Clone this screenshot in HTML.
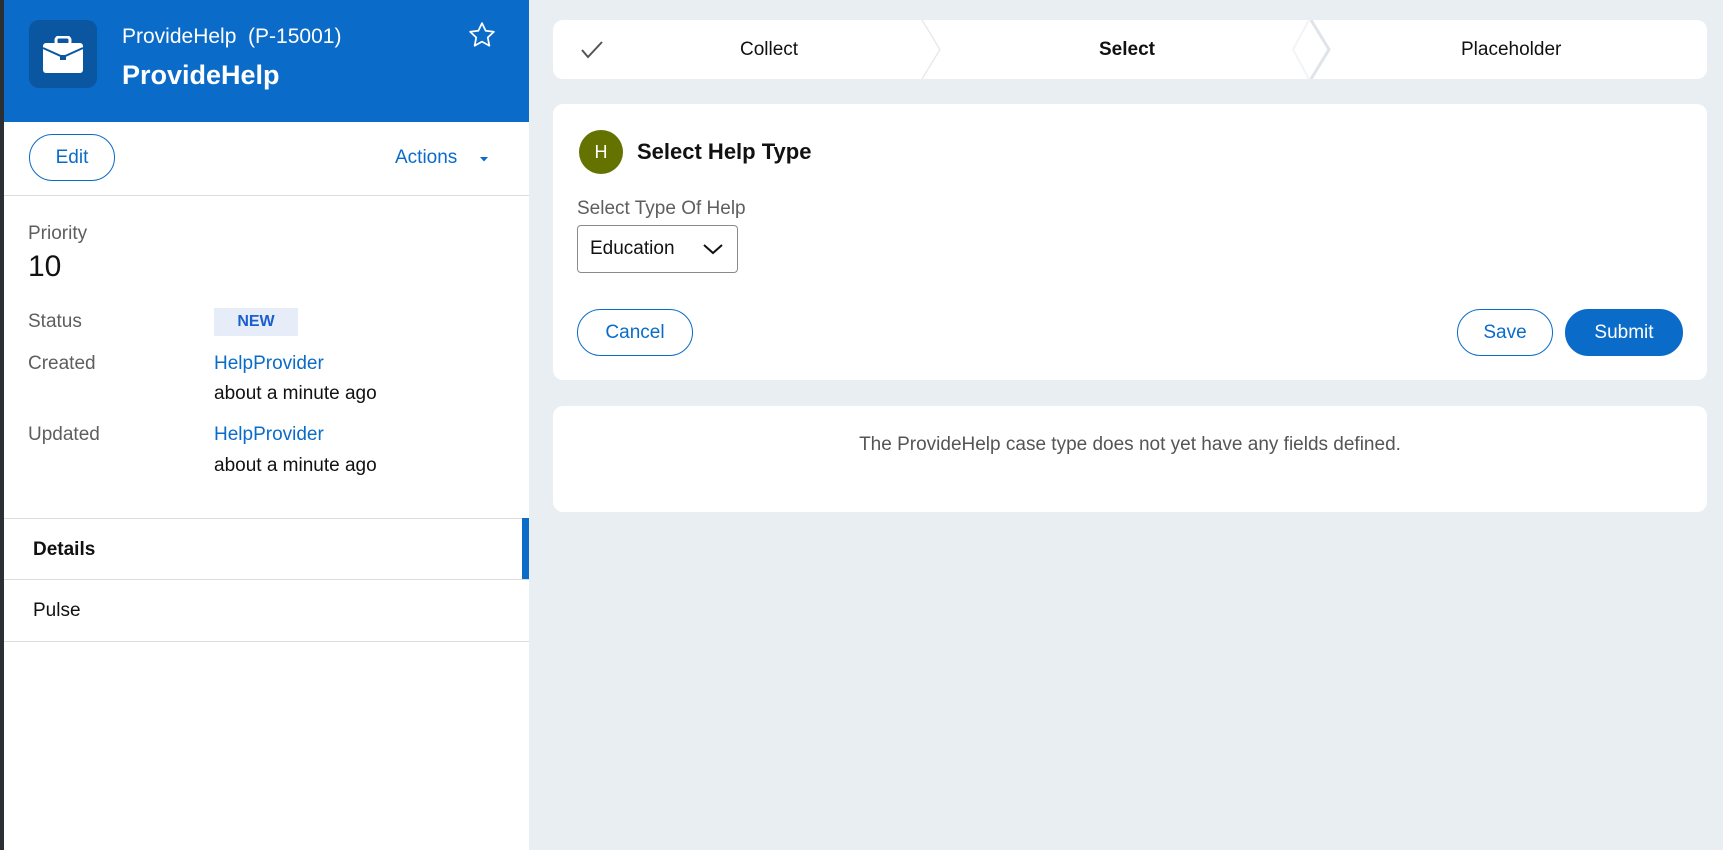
<!DOCTYPE html>
<html><head><meta charset="utf-8"><style>
*{box-sizing:border-box;margin:0;padding:0}
body{width:1723px;height:850px;overflow:hidden;background:#e9eef2;font-family:"Liberation Sans",sans-serif;position:relative;color:#111}
.a{position:absolute;white-space:nowrap}
#strip{left:0;top:0;width:4px;height:850px;background:#2b2f33}
#panel{left:4px;top:0;width:525px;height:850px;background:#fff}
#hdr{left:4px;top:0;width:525px;height:122px;background:#0a6bc9}
.btn{position:absolute;border:1px solid #0a6bc9;border-radius:24px;color:#0a6bc9;font-size:19px;display:flex;align-items:center;justify-content:center;background:#fff}
.lbl{color:#5e5e5e;font-size:19px}
.lnk{color:#0a6bc9;font-size:19px}
.card{position:absolute;background:#fff;border-radius:10px}
.hr{position:absolute;left:4px;width:525px;height:1px;background:#dcdcdc}
</style></head><body>
<div class="a" id="strip"></div>
<div class="a" id="panel"></div>
<div class="a" id="hdr"></div>
<div class="a" style="left:29px;top:20px;width:68px;height:68px;background:#0a56a0;border-radius:10px"></div>
<svg class="a" style="left:42px;top:36px" width="42" height="38" viewBox="0 0 42 38"><rect x="14" y="1" width="14" height="8" rx="3" fill="none" stroke="#fff" stroke-width="3"/><rect x="1" y="7" width="40" height="30" rx="3" fill="#fff"/><path d="M1 12 L21 21 L41 12" fill="none" stroke="#0a56a0" stroke-width="2"/><rect x="18" y="19" width="6" height="5" fill="#0a56a0"/></svg>
<div class="a" style="left:122px;top:25px;color:#fff;font-size:21px">ProvideHelp&nbsp; (P-15001)</div>
<div class="a" style="left:122px;top:60px;color:#fff;font-size:27px;font-weight:bold">ProvideHelp</div>
<svg class="a" style="left:467px;top:20px" width="30" height="30" viewBox="0 0 24 24"><path d="M12 2.5l2.9 6.1 6.6.8-4.9 4.6 1.3 6.6L12 17.3l-5.9 3.3 1.3-6.6-4.9-4.6 6.6-.8z" fill="none" stroke="#fff" stroke-width="1.4" stroke-linejoin="round"/></svg>
<div class="btn" style="left:29px;top:134px;width:86px;height:47px">Edit</div>
<div class="a lnk" style="left:395px;top:147px">Actions</div>
<svg class="a" style="left:480px;top:157px" width="8" height="5"><path d="M0 0h8L4 4.5z" fill="#0a6bc9"/></svg>
<div class="hr" style="top:195px"></div>
<div class="a lbl" style="left:28px;top:223px">Priority</div>
<div class="a" style="left:28px;top:250px;font-size:30px">10</div>
<div class="a lbl" style="left:28px;top:311px">Status</div>
<div class="a" style="left:214px;top:308px;width:84px;height:28px;background:#e6edf9;color:#1b5fcf;font-weight:bold;font-size:16px;display:flex;align-items:center;justify-content:center">NEW</div>
<div class="a lbl" style="left:28px;top:353px">Created</div>
<div class="a lnk" style="left:214px;top:353px">HelpProvider</div>
<div class="a" style="left:214px;top:383px;font-size:19px">about a minute ago</div>
<div class="a lbl" style="left:28px;top:424px">Updated</div>
<div class="a lnk" style="left:214px;top:424px">HelpProvider</div>
<div class="a" style="left:214px;top:455px;font-size:19px">about a minute ago</div>
<div class="hr" style="top:518px"></div>
<div class="a" style="left:33px;top:539px;font-size:19px;font-weight:bold">Details</div>
<div class="a" style="left:522px;top:518px;width:7px;height:61px;background:#0a6bc9"></div>
<div class="hr" style="top:579px"></div>
<div class="a" style="left:33px;top:600px;font-size:19px">Pulse</div>
<div class="hr" style="top:641px"></div>

<div class="card" style="left:553px;top:20px;width:1154px;height:59px"></div>
<svg class="a" style="left:553px;top:20px" width="1154" height="59"><path d="M369 0 L387 29.5 L369 59" fill="none" stroke="#e3e7ea" stroke-width="1.2"/><path d="M758 0 L776 29.5 L758 59" fill="none" stroke="#e0e4e8" stroke-width="3"/><path d="M756 0 L740 29.5 L756 59" fill="none" stroke="#f2f4f6" stroke-width="2"/></svg>
<svg class="a" style="left:581px;top:41px" width="22" height="18"><path d="M1 9l6 7L21 1" fill="none" stroke="#555" stroke-width="2"/></svg>
<div class="a" style="left:740px;top:39px;font-size:19px">Collect</div>
<div class="a" style="left:1099px;top:39px;font-size:19px;font-weight:bold">Select</div>
<div class="a" style="left:1461px;top:39px;font-size:19px">Placeholder</div>

<div class="card" style="left:553px;top:104px;width:1154px;height:276px"></div>
<div class="a" style="left:579px;top:130px;width:44px;height:44px;border-radius:50%;background:#647200;color:#fff;font-size:18px;display:flex;align-items:center;justify-content:center">H</div>
<div class="a" style="left:637px;top:139px;font-size:22px;font-weight:bold">Select Help Type</div>
<div class="a lbl" style="left:577px;top:198px">Select Type Of Help</div>
<div class="a" style="left:577px;top:225px;width:161px;height:48px;border:1px solid #8a8a8a;border-radius:4px"></div>
<div class="a" style="left:590px;top:238px;font-size:19px">Education</div>
<svg class="a" style="left:703px;top:244px" width="20" height="12"><path d="M1 1l9 8 9-8" fill="none" stroke="#111" stroke-width="2"/></svg>
<div class="btn" style="left:577px;top:309px;width:116px;height:47px">Cancel</div>
<div class="btn" style="left:1457px;top:309px;width:96px;height:47px">Save</div>
<div class="btn" style="left:1565px;top:309px;width:118px;height:47px;background:#0a6bc9;color:#fff">Submit</div>

<div class="card" style="left:553px;top:406px;width:1154px;height:106px"></div>
<div class="a" style="left:553px;top:434px;width:1154px;text-align:center;color:#555;font-size:19px">The ProvideHelp case type does not yet have any fields defined.</div>
</body></html>
